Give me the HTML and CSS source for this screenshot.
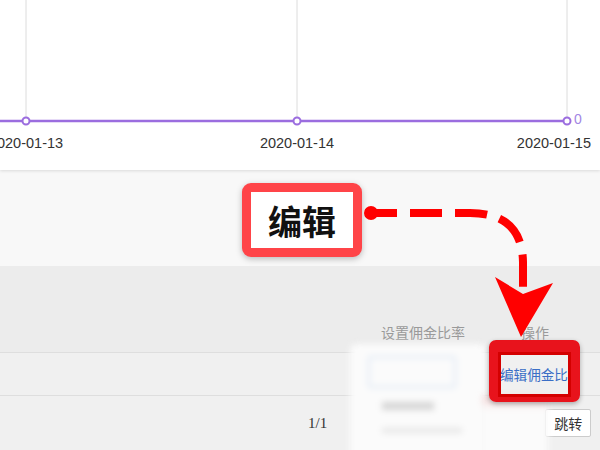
FILE: index.html
```html
<!DOCTYPE html>
<html lang="zh-CN">
<head>
    <meta charset="UTF-8">
    <meta name="viewport" content="width=device-width, initial-scale=1.0">
    <title>佣金设置</title>
    <link rel="stylesheet" href="styles.css">
</head>
<body>
<div class="page">
    <!-- trend chart -->
    <div class="chartPanel">
        <svg class="chart" width="600" height="170" viewBox="0 0 600 170">
            <g class="grid">
                <line x1="26" y1="0" x2="26" y2="121"/>
                <line x1="297" y1="0" x2="297" y2="121"/>
                <line x1="567" y1="0" x2="567" y2="121"/>
            </g>
            <line class="series" x1="0" y1="121" x2="567" y2="121"/>
            <g class="dots">
                <circle cx="26" cy="121" r="3.5"/>
                <circle cx="297" cy="121" r="3.5"/>
                <circle cx="567" cy="121" r="3.5"/>
            </g>
            <text class="axisVal" x="574" y="124">0</text>
            <text class="axisDate" x="26" y="148" text-anchor="middle">2020-01-13</text>
            <text class="axisDate" x="297" y="148" text-anchor="middle">2020-01-14</text>
            <text class="axisDate" x="591" y="148" text-anchor="end">2020-01-15</text>
        </svg>
    </div>

    <div class="toolbar"></div>

    <div class="table">
        <div class="thead">
            <span class="th rate">设置佣金比率</span>
            <span class="th ops">操作</span>
        </div>
        <div class="tr">
            <span class="link">编辑佣金比</span>
        </div>
        <div class="pager">
            <span class="pageNum">1/1</span>
            <button class="jumpBtn">跳转</button>
        </div>
    </div>

    <!-- blurred area of the screenshot -->
    <div class="blurPatch">
        <div class="blurInput"></div>
        <div class="blurText"></div>
        <div class="blurText small"></div>
    </div>
    <div class="blurPatch side"></div>

    <!-- annotations -->
    <div class="callout">编辑</div>
    <svg class="arrow" width="600" height="450" viewBox="0 0 600 450">
        <circle cx="371" cy="213" r="7"/>
        <path class="dash" d="M365 213 L470 213 Q522 213 523 262 L523 292"/>
        <polygon points="495,277 523,294 553,283 521,337"/>
    </svg>
    <div class="highlight"><div class="highlightInner"></div></div>
</div>
</body>
</html>
```

FILE: styles.css
```css
* {
    box-sizing: border-box;
}

body {
    margin: 0;
    font-family: "Liberation Sans", "Noto Sans CJK SC", sans-serif;
    background: #f0f0f0;
}

.page {
    position: relative;
    width: 600px;
    height: 450px;
    overflow: hidden;
}

/*Chart*/
.chartPanel {
    height: 170px;
    background: #ffffff;
    box-shadow: 0 1px 3px rgba(0, 0, 0, .12);
    position: relative;
    z-index: 1;
}

.chart {
    display: block;
}

.chart .grid line {
    stroke: #dcdcdc;
    stroke-width: 1;
}

.chart .series {
    stroke: #9b6ddf;
    stroke-width: 2.5;
}

.chart .dots circle {
    fill: #ffffff;
    stroke: #9b6ddf;
    stroke-width: 2;
}

.chart .axisVal {
    font-size: 14px;
    fill: #a386e4;
}

.chart .axisDate {
    font-size: 14.5px;
    fill: #333333;
}

.toolbar {
    height: 96px;
    background: #f8f8f8;
}

/*Table*/
.table {
    background: #f0f0f0;
}

.thead {
    height: 86px;
    background: #ececec;
    display: flex;
    align-items: flex-end;
    padding-bottom: 10px;
    font-size: 14px;
    color: #9a9a9a;
}

.thead .rate {
    margin-left: 381px;
}

.thead .ops {
    margin-left: 56px;
}

.tr {
    height: 44px;
    border-top: 1px solid #dedede;
    border-bottom: 1px solid #dedede;
    display: flex;
    align-items: center;
    padding-left: 500px;
}

.tr .link {
    position: relative;
    z-index: 2;
    font-size: 13.6px;
    color: #3a6ec6;
    white-space: nowrap;
}

.pager {
    height: 54px;
    display: flex;
    align-items: center;
    padding-left: 308px;
}

.pageNum {
    font-family: "Liberation Serif", "Noto Sans CJK SC", serif;
    font-size: 15px;
    color: #333;
}

.jumpBtn {
    margin-left: 218px;
    width: 46px;
    height: 28px;
    background: #ffffff;
    border: 1px solid #cccccc;
    border-radius: 2px;
    font-family: "Liberation Sans", "Noto Sans CJK SC", sans-serif;
    font-size: 14px;
    color: #333;
    padding: 0;
}

/*Blurred patch*/
.blurPatch {
    position: absolute;
    left: 350px;
    top: 344px;
    width: 136px;
    height: 120px;
    background: #fbfbfb;
    filter: blur(3px);
    border-radius: 6px;
}

.blurPatch.side {
    left: 482px;
    top: 396px;
    width: 66px;
    background: linear-gradient(#f3d6d6, #fbfbfb 14px);
    border-radius: 0;
}

.blurPatch .blurInput {
    position: absolute;
    left: 18px;
    top: 12px;
    width: 88px;
    height: 32px;
    border: 2px solid #dbe6f4;
    border-radius: 3px;
}

.blurPatch .blurText {
    position: absolute;
    left: 32px;
    top: 58px;
    width: 52px;
    height: 8px;
    background: #d6d6d6;
}

.blurPatch .blurText.small {
    top: 84px;
    width: 80px;
    height: 5px;
    background: #e6e6e6;
}

/*Annotations*/
.callout {
    position: absolute;
    left: 242px;
    top: 183px;
    width: 120px;
    height: 74px;
    border: 9px solid #ff4448;
    border-radius: 9px;
    background: #ffffff;
    box-shadow: 0 2px 6px rgba(0, 0, 0, .25);
    font-size: 34px;
    font-weight: bold;
    color: #111;
    display: flex;
    align-items: center;
    justify-content: center;
    z-index: 3;
}

.arrow {
    position: absolute;
    left: 0;
    top: 0;
    z-index: 4;
}

.arrow circle,
.arrow polygon {
    fill: #ff0000;
}

.arrow .dash {
    fill: none;
    stroke: #ff0000;
    stroke-width: 8;
    stroke-dasharray: 32 13;
}

.highlight {
    position: absolute;
    left: 489px;
    top: 340px;
    width: 91px;
    height: 62px;
    border-radius: 7px;
    border: 9px solid #e8131c;
    border-top-width: 12px;
    border-bottom-width: 5px;
    box-shadow: 0 2px 5px rgba(0, 0, 0, .3);
    z-index: 2;
}

.highlightInner {
    width: 100%;
    height: 100%;
    border: 3px solid #d40000;
}
```
